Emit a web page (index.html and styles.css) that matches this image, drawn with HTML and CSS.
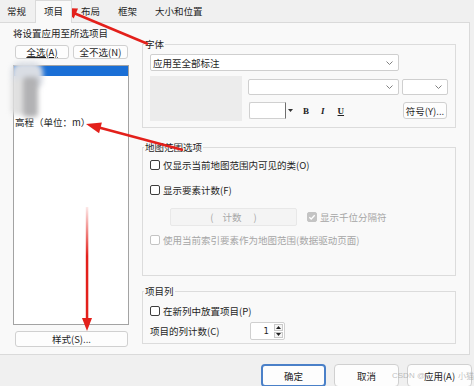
FILE: index.html
```html
<!DOCTYPE html>
<html lang="zh-CN">
<head>
<meta charset="utf-8">
<title>属性</title>
<link rel="stylesheet" href="styles.css">
</head>
<body>
<div class="window">
  <div class="tabs">
    <div class="tab">常规</div>
    <div class="tab active">项目</div>
    <div class="tab">布局</div>
    <div class="tab">框架</div>
    <div class="tab">大小和位置</div>
  </div>
  <div class="panel">
    <div class="left">
      <div class="caption">将设置应用至所选项目</div>
      <div class="btn-row">
        <button class="btn btn-all"><span class="focus">全选(A)</span></button>
        <button class="btn btn-none">全不选(N)</button>
      </div>
      <div class="list">
        <div class="list-sel"></div>
        <div class="list-item">高程（单位：m）</div>
        <div class="blur"><div class="blur-a"></div><div class="blur-c"></div><div class="blur-b"></div></div>
      </div>
      <button class="btn btn-style">样式(S)...</button>
    </div>
    <div class="right">
      <fieldset class="group group-font">
        <legend>字体</legend>
        <div class="group-body body-font">
          <div class="select select-apply"><span>应用至全部标注</span><svg class="chev" width="7" height="4" viewBox="0 0 7 4"><path d="M0.5 0.5 L3.5 3.5 L6.5 0.5" fill="none" stroke="#808080" stroke-width="1"/></svg></div>
          <div class="font-row">
            <div class="preview"></div>
            <div class="font-controls">
              <div class="combo-row">
                <div class="select select-name"><span></span><svg class="chev" width="7" height="4" viewBox="0 0 7 4"><path d="M0.5 0.5 L3.5 3.5 L6.5 0.5" fill="none" stroke="#808080" stroke-width="1"/></svg></div>
                <div class="select select-size"><span></span><svg class="chev" width="7" height="4" viewBox="0 0 7 4"><path d="M0.5 0.5 L3.5 3.5 L6.5 0.5" fill="none" stroke="#808080" stroke-width="1"/></svg></div>
              </div>
              <div class="style-row">
                <div class="color-combo">
                  <span class="color-field"></span>
                  <svg class="color-drop" width="5" height="3" viewBox="0 0 5 3"><path d="M0 0 H5 L2.5 3 Z" fill="#333"/></svg>
                </div>
                <span class="fmt fmt-b">B</span>
                <span class="fmt fmt-i">I</span>
                <span class="fmt fmt-u">U</span>
                <button class="btn btn-symbol">符号(Y)...</button>
              </div>
            </div>
          </div>
        </div>
      </fieldset>

      <fieldset class="group group-map">
        <legend>地图范围选项</legend>
        <div class="group-body body-map">
          <div class="check"><span class="box"></span>仅显示当前地图范围内可见的类(O)</div>
          <div class="check row-gap"><span class="box"></span>显示要素计数(F)</div>
          <div class="count-row">
            <div class="count-field"><span class="paren-l">(</span>计数<span class="paren-r">)</span></div>
            <div class="check disabled sep-check"><span class="box checked"><svg width="8" height="8" viewBox="0 0 8 8"><path d="M1.3 4.2 L3.2 6 L6.7 2.2" fill="none" stroke="#fff" stroke-width="1.3"/></svg></span>显示千位分隔符</div>
          </div>
          <div class="check disabled row-last"><span class="box"></span>使用当前索引要素作为地图范围(数据驱动页面)</div>
        </div>
      </fieldset>

      <fieldset class="group group-cols">
        <legend>项目列</legend>
        <div class="group-body body-cols">
          <div class="check"><span class="box"></span>在新列中放置项目(P)</div>
          <div class="cols-row">
            <span class="cols-label">项目的列计数(C)</span>
            <div class="spin">
              <span class="spin-val">1</span>
              <span class="spin-btns">
                <span class="spin-btn"><svg width="5" height="3" viewBox="0 0 5 3"><path d="M0 3 H5 L2.5 0 Z" fill="#222"/></svg></span>
                <span class="spin-btn"><svg width="5" height="3" viewBox="0 0 5 3"><path d="M0 0 H5 L2.5 3 Z" fill="#222"/></svg></span>
              </span>
            </div>
          </div>
        </div>
      </fieldset>
    </div>
  </div>
  <div class="footer">
    <button class="fbtn default">确定</button>
    <button class="fbtn">取消</button>
    <button class="fbtn">应用(A)</button>
  </div>
</div>
<div class="watermark"><span class="wm-a">CSDN @</span><span class="wm-b">小猫</span></div>
<svg class="arrows" width="474" height="386" viewBox="0 0 474 386">
  <defs>
    <linearGradient id="fade" gradientUnits="userSpaceOnUse" x1="0" y1="207" x2="0" y2="330">
      <stop offset="0" stop-color="#e3201b" stop-opacity="0.1"/>
      <stop offset="0.4" stop-color="#e3201b" stop-opacity="1"/>
      <stop offset="1" stop-color="#e3201b" stop-opacity="1"/>
    </linearGradient>
  </defs>
  <line x1="148" y1="44" x2="75" y2="13.5" stroke="#e3201b" stroke-width="2.5"/>
  <polygon points="63,8 78,8.4 73.7,18.5" fill="#e3201b"/>
  <line x1="183" y1="150" x2="99" y2="127.5" stroke="#e3201b" stroke-width="2.5"/>
  <polygon points="86,124 101.9,122.6 99.1,133.2" fill="#e3201b"/>
  <rect x="85.8" y="207" width="2.5" height="113" fill="url(#fade)"/>
  <polygon points="87,331 82,318 92,318" fill="#e3201b"/>
</svg>
</body>
</html>
```

FILE: styles.css
```css
* { box-sizing: border-box; }
html, body { margin: 0; padding: 0; }
body {
  width: 474px;
  height: 386px;
  overflow: hidden;
  position: relative;
  background: #f0f0f0;
  font-family: "Noto Sans CJK SC", "Microsoft YaHei", sans-serif;
  font-size: 9.5px;
  color: #1e1e1e;
}
button { font: inherit; color: inherit; margin: 0; padding: 0; cursor: default; }

.window { display: flex; flex-direction: column; height: 386px; }

/* tabs */
.tabs { display: flex; height: 22px; margin-left: -2px; flex: none; }
.tab {
  padding: 0 8px;
  line-height: 21px;
  border: 1px solid transparent;
  border-bottom: 0;
  white-space: nowrap;
}
.tab.active {
  background: #f9f9f9;
  border-color: #dadada;
  margin-bottom: -1px;
  position: relative;
  z-index: 1;
}

/* panel */
.panel {
  display: flex;
  height: 333px;
  flex: none;
  margin-right: 4px;
  background: #f9f9f9;
  border: 1px solid #dadada;
  border-left: 0;
}

.left {
  width: 142px;
  flex: none;
  display: flex;
  flex-direction: column;
  padding: 4px 0 0 13px;
}
.caption { height: 12px; line-height: 12px; white-space: nowrap; }
.btn-row { display: flex; gap: 4px; margin: 6px 0 0 2px; }
.btn {
  background: #fdfdfd;
  border: 1px solid #d0d0d0;
  border-radius: 3px;
  display: flex;
  align-items: center;
  justify-content: center;
  line-height: 12px;
  white-space: nowrap;
}
.btn-all { width: 54px; height: 14px; }
.btn-none { width: 55px; height: 14px; }
.focus { text-decoration: underline; text-underline-offset: 1px; }

.list {
  position: relative;
  width: 116px;
  height: 260px;
  margin-top: 6px;
  background: #fff;
  border: 1px solid #a3a3a3;
}
.list-sel { height: 10px; background: #1a6fd6; }
.list-item { margin: 40px 0 0 1px; line-height: 12px; white-space: nowrap; }

.blur {
  position: absolute;
  left: -4px;
  top: -5px;
  width: 34px;
  height: 58px;
  filter: blur(2.5px);
}
.blur-a {
  position: absolute; left: 1px; top: 1px; width: 32px; height: 28px;
  background: #d9dde4; border-radius: 10px;
}
.blur-c {
  position: absolute; left: 1px; top: 18px; width: 16px; height: 36px;
  background: #e0e0e0; border-radius: 5px;
}
.blur-b {
  position: absolute; left: 13px; top: 16px; width: 15px; height: 40px;
  background: #b2b2b4; border-radius: 4px;
}

.btn-style { width: 113px; height: 16px; margin: 6px 0 0 2px; }

/* right */
.right {
  flex: none;
  width: 314px;
  padding-top: 15px;
  display: flex;
  flex-direction: column;
}
.group {
  margin: 0;
  padding: 0;
  border: 1px solid #dcdcdc;
  min-width: 0;
}
.group legend {
  margin-left: 1px;
  padding: 0 1px;
  line-height: 12px;
  height: 12px;
}
.group-body { padding: 4px 7px 6px; }

.select {
  display: flex;
  align-items: center;
  justify-content: space-between;
  background: #fff;
  border: 1px solid #cfcfcf;
  border-radius: 2px;
  padding: 0 5px 0 2px;
  line-height: 12px;
  white-space: nowrap;
}
.chev { flex: none; }
.select-apply { width: 249px; height: 17px; }

.font-row { display: flex; gap: 6px; margin-top: 5px; }
.preview { width: 92px; height: 45px; background: #ececec; flex: none; }
.font-controls { flex: 1; padding-top: 3px; display: flex; flex-direction: column; }
.combo-row { display: flex; gap: 3px; }
.select-name { flex: 1; height: 16px; }
.select-size { width: 46px; height: 16px; }

.style-row { display: flex; align-items: center; margin-top: 7px; height: 17px; }
.color-combo { display: flex; align-items: center; width: 44px; height: 17px; margin-left: 1px; }
.color-field {
  width: 37px;
  height: 17px;
  background: #fff;
  border: 1px solid #d0d0d0;
  border-right: 1px solid #6e6e6e;
  border-radius: 2px 0 0 2px;
}
.color-drop { margin-left: 2px; }
.fmt {
  font-family: "Liberation Serif", "DejaVu Serif", serif;
  font-weight: bold;
  font-size: 9px;
  line-height: 12px;
  color: #222;
}
.fmt-b { margin-left: 10px; }
.fmt-i { margin-left: 12px; font-style: italic; }
.fmt-u { margin-left: 13px; text-decoration: underline; }
.btn-symbol { width: 44px; height: 17px; margin-left: auto; margin-right: 1px; }

.group-map { margin-top: 13px; }
.body-map { padding: 6px 7px 29px; }

.check {
  display: flex;
  align-items: center;
  height: 12px;
  line-height: 12px;
  white-space: nowrap;
}
.box {
  flex: none;
  width: 10px;
  height: 10px;
  margin-right: 3px;
  border: 1px solid #3c3c3c;
  border-radius: 2px;
  background: #fff;
  display: flex;
  align-items: center;
  justify-content: center;
}
.check.disabled { color: #a6a6a6; }
.check.disabled .box { border-color: #c4c4c4; }
.check.disabled .box.checked { background: #c4c4c4; }
.row-gap { margin-top: 13px; }
.row-last { margin-top: 8px; }

.count-row { display: flex; align-items: center; height: 18px; margin: 12px 0 0 20px; }
.count-field {
  width: 127px;
  height: 18px;
  background: #f4f4f4;
  border: 1px solid #e8e8e8;
  border-radius: 2px;
  display: flex;
  align-items: center;
  justify-content: center;
  color: #a6a6a6;
  line-height: 12px;
}
.paren-l { margin-right: 9px; }
.paren-r { margin-left: 12px; }
.sep-check { margin-left: 10px; }

.group-cols { margin-top: 9px; }
.body-cols { padding: 8px 7px 3px; }
.cols-row { display: flex; align-items: center; height: 18px; margin-top: 5px; }
.cols-label { width: 100px; line-height: 12px; white-space: nowrap; }
.spin {
  display: flex;
  width: 35px;
  height: 18px;
  background: #fff;
  border: 1px solid #d0d0d0;
  border-radius: 2px;
}
.spin-val { flex: 1; text-align: right; padding-right: 5px; line-height: 16px; font-family: "DejaVu Sans", sans-serif; font-size: 8.5px; }
.spin-btns {
  width: 10px;
  display: flex;
  flex-direction: column;
  gap: 1px;
  padding: 1px 1px 1px 0;
}
.spin-btn {
  flex: 1;
  border: 1px solid #c9c9c9;
  background: #f6f6f6;
  display: flex;
  align-items: center;
  justify-content: center;
}

/* footer */
.footer {
  flex: 1;
  display: flex;
  justify-content: flex-end;
  align-items: flex-start;
  gap: 8px;
  padding: 9px 2px 0 0;
}
.fbtn {
  width: 65px;
  height: 23px;
  background: #fdfdfd;
  border: 1px solid #d0d0d0;
  border-radius: 4px;
  display: flex;
  align-items: center;
  justify-content: center;
  line-height: 12px;
}
.fbtn.default { border: 2px solid #4a80c8; }

.watermark {
  position: absolute;
  left: 392px;
  bottom: 5px;
  width: 82px;
  display: flex;
  justify-content: space-between;
  font-size: 8px;
  line-height: 10px;
  color: rgba(130, 130, 130, 0.5);
  white-space: nowrap;
  pointer-events: none;
}
.wm-a { font-family: "Liberation Sans", sans-serif; }
.arrows { position: absolute; left: 0; top: 0; pointer-events: none; }
```
